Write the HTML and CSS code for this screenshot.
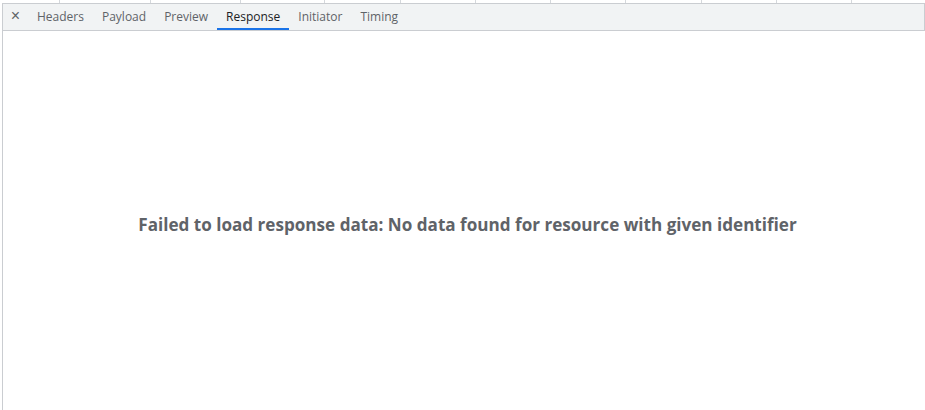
FILE: index.html
```html
<!DOCTYPE html>
<html lang="en">
<head>
    <meta charset="UTF-8">
    <meta name="viewport" content="width=device-width, initial-scale=1.0">
    <title>Response</title>
    <link rel="stylesheet" href="styles.css">
</head>
<body>
    <div class="columns">
        <div class="col" style="width: 60px"></div>
        <div class="col" style="width: 91px"></div>
        <div class="col" style="width: 90px"></div>
        <div class="col" style="width: 84px"></div>
        <div class="col" style="width: 76px"></div>
        <div class="col" style="width: 75px"></div>
        <div class="col" style="width: 75px"></div>
        <div class="col" style="width: 75px"></div>
        <div class="col" style="width: 76px"></div>
        <div class="col" style="width: 75px"></div>
        <div class="col" style="width: 75px"></div>
    </div>
    <div class="panel">
        <div class="tabbar">
            <button class="close" title="Close">&times;</button>
            <div class="tab">Headers</div>
            <div class="tab">Payload</div>
            <div class="tab">Preview</div>
            <div class="tab active">Response</div>
            <div class="tab">Initiator</div>
            <div class="tab">Timing</div>
        </div>
        <div class="content">
            <div class="message">Failed to load response data: No data found for resource with given identifier</div>
        </div>
    </div>
</body>
</html>
```

FILE: styles.css
```css
html, body {
    height: 100%;
}
body {
    margin: 0;
    font-family: "Open Sans", "DejaVu Sans", sans-serif;
    background: #fff;
    display: flex;
    flex-direction: column;
    overflow: hidden;
}
.columns {
    display: flex;
    height: 3px;
    flex: none;
}
.col {
    border-right: 1px solid #d5d8dc;
    box-sizing: border-box;
    flex: none;
}
.panel {
    flex: 1;
    display: flex;
    flex-direction: column;
    margin-left: 2px;
    border-left: 1px solid #cacdd1;
}
.tabbar {
    display: flex;
    align-items: stretch;
    height: 26px;
    background: #f1f3f4;
    border-top: 1px solid #cacdd1;
    border-bottom: 1px solid #cacdd1;
    border-right: 1px solid #cacdd1;
}
.close {
    width: 25px;
    border: none;
    background: none;
    padding: 0 0 2px;
    font-size: 16px;
    line-height: 1;
    color: #5f6368;
    cursor: pointer;
}
.tab {
    display: flex;
    align-items: center;
    padding: 0 9px 1px;
    font-size: 12px;
    color: #5f6368;
    border-bottom: 2px solid transparent;
    border-top: 1px solid transparent;
}
.tab.active {
    color: #202124;
    border-bottom-color: #1a73e8;
}
.content {
    flex: 1;
    display: flex;
    align-items: center;
    justify-content: center;
    padding-top: 7px;
    padding-left: 7px;
}
.message {
    font-size: 17.1px;
    font-weight: bold;
    color: #5f6368;
}
```
